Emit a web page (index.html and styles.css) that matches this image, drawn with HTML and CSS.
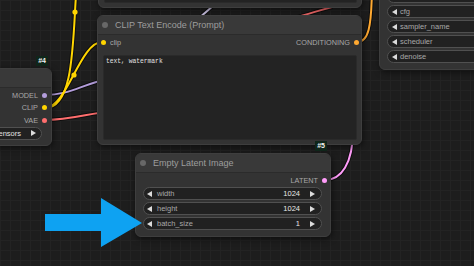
FILE: index.html
```html
<!DOCTYPE html>
<html lang="en">
  <head>
    <meta charset="UTF-8" />
    <meta name="viewport" content="width=device-width, initial-scale=1.0" />
    <title>Empty Latent Image - batch_size</title>
    <link rel="stylesheet" href="styles.css">
  </head>
  <body>
    <div class="canvas">
      <!-- links are drawn under the nodes -->
      <svg class="wires" width="474" height="266" viewBox="0 0 474 266">
        <g class="link-shadow">
          <path d="M45,95 C70,95 82,84 112,78" />
          <path d="M45,120 C70,120 86,114 112,111" />
          <path d="M45,108 C95,108 55,-84 105,-84" />
          <path d="M45,108 C67,108 80,42 102,42" />
          <path d="M357,42 C368,42 372,30 372,-20" />
          <path d="M325,180 C341,180 353,164 353,130" />
          <path d="M198,19 L214,5" />
          <path d="M298,17 C310,13 318,11 332,7" />
        </g>
        <path class="link link-model" d="M45,95 C70,95 82,84 112,78" />
        <path class="link link-vae" d="M45,120 C70,120 86,114 112,111" />
        <path class="link link-clip" d="M45,108 C95,108 55,-84 105,-84" />
        <path class="link link-clip" d="M45,108 C67,108 80,42 102,42" />
        <path class="link link-cond" d="M357,42 C368,42 372,30 372,-20" />
        <path class="link link-latent" d="M325,180 C341,180 353,164 353,130" />
        <path class="link link-model-light" d="M198,19 L214,5" />
        <path class="link link-vae" d="M298,17 C310,13 318,11 332,7" />
        <circle class="link-clip-fill" cx="75" cy="12" r="2.6" />
        <circle class="link-clip-fill" cx="74" cy="75" r="2.6" />
      </svg>

      <!-- node above the prompt, only its bottom is visible -->
      <div class="node node-top">
        <div class="prompt"></div>
      </div>

      <!-- Load Checkpoint, cut off on the left -->
      <div class="node node-ckpt">
        <span class="badge">#4</span>
        <div class="node-title"></div>
        <div class="outputs">
          <div class="out-row">MODEL<span class="dot dot-model"></span></div>
          <div class="out-row">CLIP<span class="dot dot-clip"></span></div>
          <div class="out-row">VAE<span class="dot dot-vae"></span></div>
        </div>
        <div class="widget widget-combo">
          <span class="value">sd_xl_base_1.0.safetensors</span>
          <span class="arr-r"></span>
        </div>
      </div>

      <!-- CLIP Text Encode -->
      <div class="node node-clip">
        <div class="node-title"><span class="title-dot"></span>CLIP Text Encode (Prompt)</div>
        <div class="slots">
          <div class="slot"><span class="dot dot-clip"></span>clip</div>
          <div class="slot">CONDITIONING<span class="dot dot-cond"></span></div>
        </div>
        <div class="prompt">text, watermark</div>
      </div>

      <!-- KSampler, cut off on the right -->
      <div class="node node-sampler">
        <div class="widget"><span class="arr-l"></span></div>
        <div class="widget"><span class="arr-l"></span><span class="label">cfg</span></div>
        <div class="widget"><span class="arr-l"></span><span class="label">sampler_name</span></div>
        <div class="widget"><span class="arr-l"></span><span class="label">scheduler</span></div>
        <div class="widget"><span class="arr-l"></span><span class="label">denoise</span></div>
      </div>

      <!-- Empty Latent Image -->
      <div class="node node-latent">
        <span class="badge">#5</span>
        <div class="node-title"><span class="title-dot"></span>Empty Latent Image</div>
        <div class="slots slots-out">
          <div class="slot">LATENT<span class="dot dot-latent"></span></div>
        </div>
        <div class="widgets">
          <div class="widget"><span class="arr-l"></span><span class="label">width</span><span class="value">1024</span><span class="arr-r"></span></div>
          <div class="widget"><span class="arr-l"></span><span class="label">height</span><span class="value">1024</span><span class="arr-r"></span></div>
          <div class="widget"><span class="arr-l"></span><span class="label">batch_size</span><span class="value">1</span><span class="arr-r"></span></div>
        </div>
      </div>

      <!-- pointer arrow -->
      <svg class="pointer" width="97" height="49" viewBox="0 0 97 49">
        <polygon points="0,16 56,16 56,0 97,25 56,49 56,33 0,33" />
      </svg>
    </div>
  </body>
</html>
```

FILE: styles.css
```css
body {
  margin: 0;
  background-color: #1d1d1d;
  font-family: "Liberation Sans", Arial, sans-serif;
}

.canvas {
  position: relative;
  width: 474px;
  height: 266px;
  overflow: hidden;
  background-color: #1d1d1d;
  background-image:
    linear-gradient(#232323 1px, transparent 1px),
    linear-gradient(90deg, #232323 1px, transparent 1px);
  background-size: 10px 10px;
}

/* links */
.wires {
  position: absolute;
  left: 0;
  top: 0;
  z-index: 1;
}

.link-shadow path {
  fill: none;
  stroke: rgba(0, 0, 0, 0.55);
  stroke-width: 4;
}

.link {
  fill: none;
  stroke-width: 2;
}

.link-model { stroke: #b39ddb; }
.link-model-light { stroke: #d6cdf0; }
.link-vae { stroke: #ff6e6e; }
.link-clip { stroke: #ffd500; }
.link-cond { stroke: #ffa931; }
.link-latent { stroke: #ff9cf9; }
.link-clip-fill { fill: #ffd500; }

/* nodes */
.node {
  position: absolute;
  z-index: 2;
  display: flex;
  flex-direction: column;
  box-sizing: border-box;
  background-color: #333;
  border: 1px solid #3e3e3e;
  border-radius: 6px;
  box-shadow: 1px 2px 6px rgba(0, 0, 0, 0.55);
}

.node-title {
  display: flex;
  align-items: center;
  gap: 7px;
  height: 18px;
  flex-shrink: 0;
  padding-left: 4px;
  background-color: #393939;
  border-bottom: 1px solid #2b2b2b;
  border-radius: 5px 5px 0 0;
  color: #9d9d9d;
  font-size: 9px;
}

.title-dot {
  width: 6px;
  height: 6px;
  border-radius: 50%;
  background-color: #686868;
}

.badge {
  position: absolute;
  top: -13px;
  right: 3px;
  padding: 1px 2px;
  background-color: #0f261a;
  color: #f2f2f2;
  font-size: 7px;
  font-weight: bold;
  line-height: 8px;
}

.slots {
  display: flex;
  justify-content: space-between;
  align-items: center;
  height: 14px;
  flex-shrink: 0;
  padding: 0 2px 0 3px;
}

.slots-out {
  justify-content: flex-end;
  padding-right: 3px;
}

.slot,
.out-row {
  display: flex;
  align-items: center;
  gap: 4px;
  color: #a8a8a8;
  font-size: 7.3px;
}

.dot {
  width: 5px;
  height: 5px;
  border-radius: 50%;
}

.dot-model { background-color: #b39ddb; }
.dot-clip { background-color: #ffd500; }
.dot-vae { background-color: #ff6e6e; }
.dot-cond { background-color: #ffa931; }
.dot-latent { background-color: #ff9cf9; }

.prompt {
  flex: 1;
  margin: 4px 4px 4px 5px;
  padding: 2px 2px;
  background-color: #232323;
  border: 1px solid #2a2a2a;
  border-radius: 2px;
  color: #e0e0e0;
  font-family: "Liberation Mono", monospace;
  font-size: 6.3px;
}

.node-clip .prompt {
  margin-top: 6px;
}

/* widgets */
.widget {
  display: flex;
  align-items: center;
  flex-shrink: 0;
  height: 13px;
  box-sizing: border-box;
  padding: 0 6px 0 3px;
  background-color: #212121;
  border: 1px solid #505050;
  border-radius: 7px;
  color: #a8a8a8;
  font-size: 7.5px;
  white-space: nowrap;
}

.widget .label {
  margin-left: 5px;
}

.widget .value {
  margin-left: auto;
  color: #e8e8e8;
}

.arr-l,
.arr-r {
  width: 0;
  height: 0;
  border-top: 3px solid transparent;
  border-bottom: 3px solid transparent;
}

.arr-l {
  border-right: 5px solid #dcdcdc;
}

.arr-r {
  margin-left: 10px;
  border-left: 5px solid #dcdcdc;
}

.widgets {
  display: flex;
  flex-direction: column;
  gap: 2px;
  padding: 0 8px 0 7px;
}

/* node placement on the canvas */
.node-top {
  left: 98px;
  top: -50px;
  width: 264px;
  height: 58px;
}

.node-clip {
  left: 97px;
  top: 15px;
  width: 265px;
  height: 130px;
}

.node-ckpt {
  left: -120px;
  top: 68px;
  width: 172px;
  height: 78px;
}

.outputs {
  display: flex;
  flex-direction: column;
  align-items: flex-end;
  padding: 1px 4px 0 0;
}

.out-row {
  height: 12.5px;
}

.widget-combo {
  margin: 0 9px 0 6px;
  padding-right: 5px;
}

.widget-combo .value {
  color: #e4e4e4;
}

.node-sampler {
  left: 379px;
  top: -40px;
  width: 140px;
  height: 110px;
  justify-content: flex-end;
  gap: 2px;
  padding: 0 0 6px 7px;
}

.node-sampler .widget {
  padding-left: 4px;
}

.node-sampler .label {
  margin-left: 3px;
}

.node-latent {
  left: 135px;
  top: 153px;
  width: 196px;
  height: 84px;
}

.node-latent .slots-out {
  height: 14px;
}

.pointer {
  position: absolute;
  left: 45px;
  top: 198px;
  z-index: 3;
}

.pointer polygon {
  fill: #0ea2f2;
}
```
